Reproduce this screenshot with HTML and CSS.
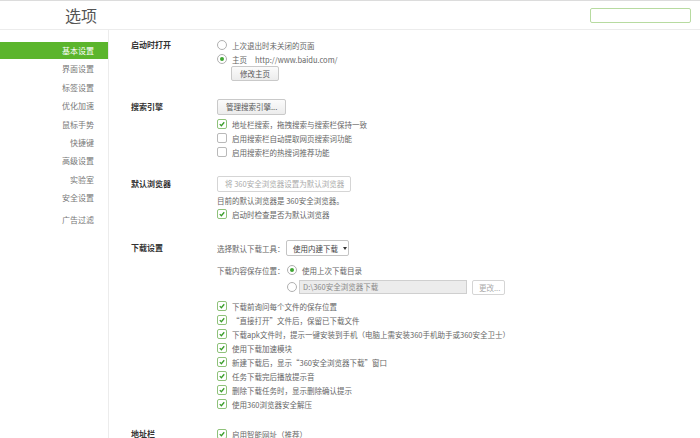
FILE: index.html
```html
<!DOCTYPE html>
<html lang="zh-CN">
<head>
<meta charset="utf-8">
<title>选项</title>
<link rel="stylesheet" href="styles.css">
</head>
<body>
<header class="topbar">
  <h1 class="title">选项</h1>
  <div class="search"></div>
</header>
<div class="main">
  <nav class="sidebar">
    <div class="nav-item active">基本设置</div>
    <div class="nav-item">界面设置</div>
    <div class="nav-item">标签设置</div>
    <div class="nav-item">优化加速</div>
    <div class="nav-item">鼠标手势</div>
    <div class="nav-item">快捷键</div>
    <div class="nav-item">高级设置</div>
    <div class="nav-item">实验室</div>
    <div class="nav-item">安全设置</div>
    <div class="nav-item extra">广告过滤</div>
  </nav>
  <main class="content">
    <section class="section s1">
      <div class="label">启动时打开</div>
      <div class="controls">
        <div class="row"><span class="radio"></span><span>上次退出时未关闭的页面</span></div>
        <div class="row"><span class="radio on"></span><span>主页</span><span class="url">http://www.baidu.com/</span></div>
        <div class="btn indent">修改主页</div>
      </div>
    </section>

    <section class="section s2">
      <div class="label lbl-btn">搜索引擎</div>
      <div class="controls">
        <div class="btn">管理搜索引擎...</div>
        <div class="rows-after-btn">
          <div class="row"><span class="cb on"><svg viewBox="0 0 10 10"><path d="M2.2 5.2 L4.2 7.2 L7.8 2.8"/></svg></span><span>地址栏搜索，拖拽搜索与搜索栏保持一致</span></div>
          <div class="row"><span class="cb"></span><span>启用搜索栏自动提取网页搜索词功能</span></div>
          <div class="row"><span class="cb"></span><span>启用搜索栏的热搜词推荐功能</span></div>
        </div>
      </div>
    </section>

    <section class="section s3">
      <div class="label lbl-btn">默认浏览器</div>
      <div class="controls">
        <div class="btn disabled wide">将 360安全浏览器设置为默认浏览器</div>
        <div class="rows-after-btn small-gap">
          <div class="row">目前的默认浏览器是 360安全浏览器。</div>
          <div class="row"><span class="cb on"><svg viewBox="0 0 10 10"><path d="M2.2 5.2 L4.2 7.2 L7.8 2.8"/></svg></span><span>启动时检查是否为默认浏览器</span></div>
        </div>
      </div>
    </section>

    <section class="section s4">
      <div class="label lbl-btn">下载设置</div>
      <div class="controls">
        <div class="line-select"><span class="pre">选择默认下载工具：</span><span class="select">使用内建下载<span class="caret"></span></span></div>
        <div class="row path-head"><span class="pre">下载内容保存位置：</span><span class="radio on"></span><span>使用上次下载目录</span></div>
        <div class="row path-row"><span class="radio"></span><span class="path">D:\360安全浏览器下载</span><span class="btn small disabled">更改...</span></div>
        <div class="checks">
          <div class="row"><span class="cb on"><svg viewBox="0 0 10 10"><path d="M2.2 5.2 L4.2 7.2 L7.8 2.8"/></svg></span><span>下载前询问每个文件的保存位置</span></div>
          <div class="row"><span class="cb on"><svg viewBox="0 0 10 10"><path d="M2.2 5.2 L4.2 7.2 L7.8 2.8"/></svg></span><span>“直接打开”文件后，保留已下载文件</span></div>
          <div class="row"><span class="cb on"><svg viewBox="0 0 10 10"><path d="M2.2 5.2 L4.2 7.2 L7.8 2.8"/></svg></span><span>下载apk文件时，提示一键安装到手机（电脑上需安装360手机助手或360安全卫士）</span></div>
          <div class="row"><span class="cb on"><svg viewBox="0 0 10 10"><path d="M2.2 5.2 L4.2 7.2 L7.8 2.8"/></svg></span><span>使用下载加速模块</span></div>
          <div class="row"><span class="cb on"><svg viewBox="0 0 10 10"><path d="M2.2 5.2 L4.2 7.2 L7.8 2.8"/></svg></span><span>新建下载后，显示“360安全浏览器下载”窗口</span></div>
          <div class="row"><span class="cb on"><svg viewBox="0 0 10 10"><path d="M2.2 5.2 L4.2 7.2 L7.8 2.8"/></svg></span><span>任务下载完后播放提示音</span></div>
          <div class="row"><span class="cb on"><svg viewBox="0 0 10 10"><path d="M2.2 5.2 L4.2 7.2 L7.8 2.8"/></svg></span><span>删除下载任务时，显示删除确认提示</span></div>
          <div class="row"><span class="cb on"><svg viewBox="0 0 10 10"><path d="M2.2 5.2 L4.2 7.2 L7.8 2.8"/></svg></span><span>使用360浏览器安全解压</span></div>
        </div>
      </div>
    </section>

    <section class="section s5">
      <div class="label">地址栏</div>
      <div class="controls">
        <div class="row"><span class="cb on"><svg viewBox="0 0 10 10"><path d="M2.2 5.2 L4.2 7.2 L7.8 2.8"/></svg></span><span>启用智能网址（推荐）</span></div>
      </div>
    </section>
  </main>
</div>
</body>
</html>
```

FILE: styles.css
```css
* { box-sizing: border-box; }
html, body { margin: 0; padding: 0; }
body {
  font-family: "Noto Sans CJK SC", "Microsoft YaHei", sans-serif;
  font-size: 7.5px;
  color: #666;
  background: #fff;
  overflow: hidden;
  height: 438px;
}
.topbar {
  height: 30px;
  border-top: 1px solid #dcdcdc;
  border-bottom: 1px solid #ececec;
  display: flex;
  align-items: center;
  justify-content: space-between;
  padding: 0 9px 0 65px;
}
.title {
  margin: 0;
  font-size: 16px;
  font-weight: 400;
  color: #555;
  line-height: 1;
}
.search {
  width: 101px;
  height: 15px;
  border: 1.5px solid #b7dba0;
  border-radius: 2px;
  background: #fff;
}
.main {
  display: flex;
  height: 408px;
}
.sidebar {
  width: 109px;
  flex: none;
  border-right: 1px solid #ececec;
  padding-top: 12px;
}
.nav-item {
  height: 18.4px;
  line-height: 17px;
  text-align: right;
  padding-right: 14px;
  font-size: 8px;
  color: #777;
}
.nav-item.active {
  background: #5bb52c;
  color: #fff;
  height: 17px;
  margin-bottom: 1.4px;
}
.nav-item.extra { margin-top: 3.5px; }
.content {
  flex: 1;
  padding: 8px 0 0 22px;
}
.section {
  display: grid;
  grid-template-columns: 86px 1fr;
}
.s1 { margin-bottom: 18px; }
.s2 { margin-bottom: 17px; }
.s3 { margin-bottom: 19px; }
.s4 { margin-bottom: 16px; }
.label {
  font-size: 8px;
  font-weight: 700;
  color: #333;
  line-height: 14px;
}
.label.lbl-btn { line-height: 16px; }
.controls { display: flex; flex-direction: column; align-items: flex-start; }
.row {
  height: 14px;
  display: flex;
  align-items: center;
  white-space: nowrap;
}
.radio {
  width: 10px;
  height: 10px;
  border: 1px solid #b0b0b0;
  border-radius: 50%;
  margin-right: 5px;
  flex: none;
  position: relative;
  background: #fff;
}
.radio.on::after {
  content: "";
  position: absolute;
  left: 2px; top: 2px;
  width: 4px; height: 4px;
  border-radius: 50%;
  background: #3fa632;
}
.cb {
  width: 10px;
  height: 10px;
  border: 1px solid #b9b9b9;
  border-radius: 2px;
  margin-right: 5px;
  flex: none;
  background: #fff;
  display: flex;
}
.cb.on { border-color: #8fc27a; }
.cb svg { width: 8px; height: 8px; }
.cb path { fill: none; stroke: #3a9d2a; stroke-width: 1.6; }
.url { margin-left: 8px; }
.btn {
  height: 16px;
  line-height: 14px;
  padding: 0 8px;
  border: 1px solid #c9c9c9;
  border-radius: 2px;
  background: linear-gradient(#fbfbfb, #ececec);
  color: #555;
  white-space: nowrap;
}
.btn.indent { margin-left: 14px; height: 15px; line-height: 13px; }
.btn.disabled { background: #fff; color: #aaa; border-color: #d5d5d5; }
.btn.wide { width: 134px; padding: 0 0 0 7px; }
.btn.small { width: 33px; height: 15px; line-height: 13px; padding: 0 6px; margin-left: 5px; background: #fff; }
.rows-after-btn { margin-top: 2px; }
.rows-after-btn.small-gap { margin-top: 1px; }
.line-select {
  height: 16px;
  display: flex;
  align-items: center;
  white-space: nowrap;
}
.pre { width: 69px; flex: none; }
.line-select .pre { width: 69px; }
.select {
  height: 16px;
  width: 63px;
  border: 1px solid #c4c4c4;
  border-radius: 2px;
  background: #fff;
  color: #444;
  display: flex;
  align-items: center;
  padding-left: 6px;
}
.caret {
  margin-left: 5px;
  width: 0; height: 0;
  border-left: 2.5px solid transparent;
  border-right: 2.5px solid transparent;
  border-top: 3px solid #333;
}
.path-head { margin-top: 7px; }
.path-head .pre { width: 70px; }
.path-row { margin-top: 3px; padding-left: 70px; }
.path {
  width: 168px;
  height: 14px;
  line-height: 12px;
  border: 1px solid #cfcfcf;
  background: #ececec;
  color: #888;
  padding-left: 3px;
  margin-left: -3px;
}
.checks { margin-top: 5px; }
```
